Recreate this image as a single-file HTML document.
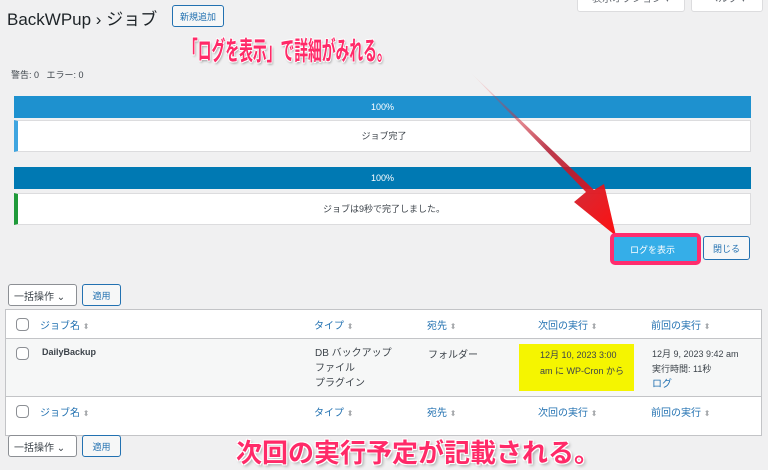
<!DOCTYPE html>
<html><head><meta charset="utf-8"><style>
*{box-sizing:border-box;margin:0;padding:0}
body{width:768px;height:468px;overflow:hidden;background:#f0f0f1;font-family:"Liberation Sans","Noto Sans CJK JP",sans-serif;color:#3c434a;position:relative;font-size:10px}
.a{position:absolute}
.btn{position:absolute;border:1px solid #2271b1;color:#2271b1;background:#f6f7f7;border-radius:3px;font-size:9px;display:flex;align-items:center;justify-content:center}
.sel{position:absolute;border:1px solid #8c8f94;background:#fff;border-radius:3px;font-size:10px;display:flex;align-items:center;padding-left:5px}
.ann{position:absolute;color:#ff2a68;font-weight:bold;white-space:nowrap;text-shadow:0 0 2px #fff,1px 1px 0 #fff,-1px -1px 0 #fff,1px -1px 0 #fff,-1px 1px 0 #fff,2px 2px 3px rgba(0,0,0,.35)}
.bar{position:absolute;left:14px;width:737px;height:22px;color:#fff;font-size:9px;text-align:center;line-height:22px}
.box{position:absolute;left:14px;width:737px;background:#fff;border:1px solid #dcdcde;font-size:9px;text-align:center}
.th{position:absolute;color:#2271b1;font-size:10px}
.cb{position:absolute;width:13px;height:13px;border:1px solid #8c8f94;border-radius:4px;background:#fff}
.s{color:#a7aaad;font-size:8px}
</style></head><body>
<div class="a" style="left:577px;top:-8px;width:108px;height:20px;background:#fff;border:1px solid #dcdcde;border-radius:3px;font-size:10px;text-align:center;line-height:14px;color:#646970">表示オプション ▾</div>
<div class="a" style="left:691px;top:-8px;width:72px;height:20px;background:#fff;border:1px solid #dcdcde;border-radius:3px;font-size:10px;text-align:center;line-height:14px;color:#646970">ヘルプ ▾</div>
<div class="a" style="left:7px;top:5px;font-size:17px;color:#1d2327">BackWPup › ジョブ</div>
<div class="btn" style="left:172px;top:5px;width:52px;height:22px">新規追加</div>
<div class="ann" style="left:184px;top:31px;font-size:26px;transform:scaleX(0.53);transform-origin:0 0">「ログを表示」で詳細がみれる。</div>
<div class="a" style="left:11px;top:68px;font-size:9px">警告: 0 &nbsp; エラー: 0</div>
<div class="bar" style="top:96px;background:#1e91cf">100%</div>
<div class="box" style="top:120px;height:32px;line-height:30px;border-left:4px solid #3fa5e0">ジョブ完了</div>
<div class="bar" style="top:167px;background:#0079b3">100%</div>
<div class="box" style="top:193px;height:32px;line-height:30px;border-left:4px solid #1f9a3a">ジョブは9秒で完了しました。</div>
<svg class="a" style="left:0;top:0" width="768" height="468">
<defs><linearGradient id="g1" x1="0" y1="0" x2="1" y2="1"><stop offset="0" stop-color="#ff4040" stop-opacity="0"/><stop offset=".5" stop-color="#b01a30" stop-opacity=".85"/><stop offset="1" stop-color="#ff1010"/></linearGradient>
<linearGradient id="g2" x1="0" y1="1" x2="1" y2="0"><stop offset="0" stop-color="#ff4040" stop-opacity="0"/><stop offset="1" stop-color="#ff1010"/></linearGradient></defs>
<polygon points="470,72 586,192 574,202 616,236 604,184 594,190" fill="url(#g1)"/>
<polygon points="478,430 520,382 510,376 536,368 530,398 524,390" fill="url(#g2)"/>
</svg>
<div class="a" style="left:610px;top:233px;width:91px;height:32px;border:4px solid #ff2d6e;border-radius:5px;background:#35aee8;color:#fff;font-size:9px;display:flex;align-items:center;justify-content:center;padding-right:6px">ログを表示</div>
<div class="btn" style="left:703px;top:236px;width:47px;height:24px">閉じる</div>
<div class="sel" style="left:8px;top:284px;width:69px;height:22px">一括操作 ⌄</div>
<div class="btn" style="left:82px;top:284px;width:39px;height:22px">適用</div>
<div class="a" style="left:5px;top:309px;width:757px;height:127px;background:#fff;border:1px solid #c3c4c7"></div>
<div class="a" style="left:6px;top:338px;width:755px;height:59px;background:#f6f7f7;border-top:1px solid #c3c4c7;border-bottom:1px solid #c3c4c7"></div>
<div class="cb" style="left:16px;top:318px"></div>
<div class="th" style="left:40px;top:317px">ジョブ名 <span class="s">⬍</span></div>
<div class="th" style="left:314px;top:317px">タイプ <span class="s">⬍</span></div>
<div class="th" style="left:427px;top:317px">宛先 <span class="s">⬍</span></div>
<div class="th" style="left:538px;top:317px">次回の実行 <span class="s">⬍</span></div>
<div class="th" style="left:651px;top:317px">前回の実行 <span class="s">⬍</span></div>
<div class="cb" style="left:16px;top:347px"></div>
<div class="a" style="left:42px;top:347px;font-size:9px;font-weight:bold">DailyBackup</div>
<div class="a" style="left:315px;top:346px;font-size:10px;line-height:15px">DB バックアップ<br>ファイル<br>プラグイン</div>
<div class="a" style="left:428px;top:346px;font-size:10px">フォルダー</div>
<div class="a" style="left:519px;top:344px;width:115px;height:47px;background:#f5f500;padding:3px 0 0 21px;font-size:9px;line-height:16px">12月 10, 2023 3:00<br>am に WP-Cron から</div>
<div class="a" style="left:652px;top:347px;font-size:9px;line-height:15px">12月 9, 2023 9:42 am<br>実行時間: 11秒<br><span style="color:#2271b1;font-size:10px">ログ</span></div>
<div class="cb" style="left:16px;top:405px"></div>
<div class="th" style="left:40px;top:404px">ジョブ名 <span class="s">⬍</span></div>
<div class="th" style="left:314px;top:404px">タイプ <span class="s">⬍</span></div>
<div class="th" style="left:427px;top:404px">宛先 <span class="s">⬍</span></div>
<div class="th" style="left:538px;top:404px">次回の実行 <span class="s">⬍</span></div>
<div class="th" style="left:651px;top:404px">前回の実行 <span class="s">⬍</span></div>
<div class="sel" style="left:8px;top:435px;width:69px;height:22px">一括操作 ⌄</div>
<div class="btn" style="left:82px;top:435px;width:39px;height:22px">適用</div>
<div class="ann" style="left:236px;top:433px;font-size:26px">次回の実行予定が記載される。</div>
</body></html>
